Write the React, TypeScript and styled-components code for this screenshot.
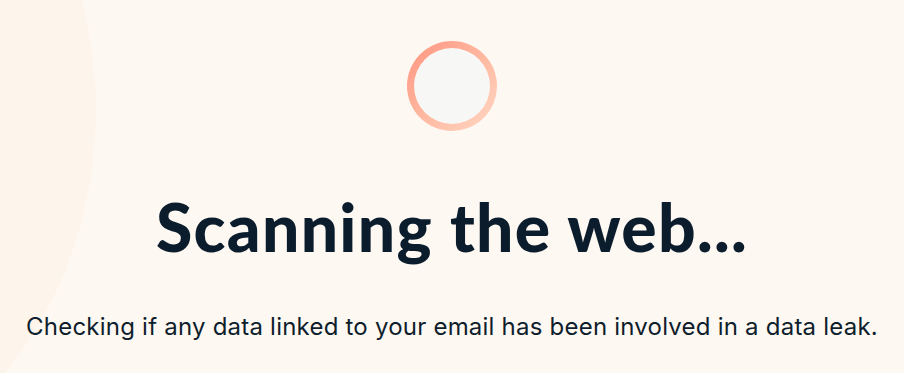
import React from 'react';
import styled, { createGlobalStyle } from 'styled-components';

const GlobalStyle = createGlobalStyle`
  html, body {
    margin: 0;
    padding: 0;
    background: #fef8f3;
  }
  body {
    font-family: Inter, "Noto Sans", sans-serif;
    overflow: hidden;
  }
`;

const Page = styled.main`
  position: relative;
  width: 904px;
  height: 373px;
  overflow: hidden;
  background: #fef8f3;
  display: flex;
  flex-direction: column;
  align-items: center;
  padding-top: 41px;
  box-sizing: border-box;

  &::before {
    content: '';
    position: absolute;
    left: -560px;
    top: -270px;
    width: 656px;
    height: 760px;
    border-radius: 50%;
    background: #fdf4ec;
  }
`;

const Spinner = styled.div`
  position: relative;
  width: 90px;
  height: 90px;
  border-radius: 50%;
  background: linear-gradient(135deg, #ff9480 0%, #ffb8a0 50%, #ffd7c4 100%);
  display: flex;
  align-items: center;
  justify-content: center;

  &::after {
    content: '';
    width: 76px;
    height: 76px;
    border-radius: 50%;
    background: #f7f8f5;
  }
`;

const Title = styled.h1`
  position: relative;
  margin: 63px 0 0;
  font-family: Lato, "Noto Sans", sans-serif;
  font-weight: 900;
  font-size: 66px;
  line-height: 1;
  letter-spacing: 1.3px;
  color: #0b1d2c;
`;

const Subtitle = styled.p`
  position: relative;
  margin: 53px 0 0;
  font-family: Inter, "Noto Sans", sans-serif;
  font-weight: 400;
  font-size: 24px;
  line-height: 1.2;
  letter-spacing: 0.22px;
  color: #0e1e2c;
  white-space: nowrap;
`;

const App = () => {
  return (
    <>
      <GlobalStyle />
      <Page>
        <Spinner />
        <Title>Scanning the web...</Title>
        <Subtitle>Checking if any data linked to your email has been involved in a data leak.</Subtitle>
      </Page>
    </>
  );
};

export default App;
